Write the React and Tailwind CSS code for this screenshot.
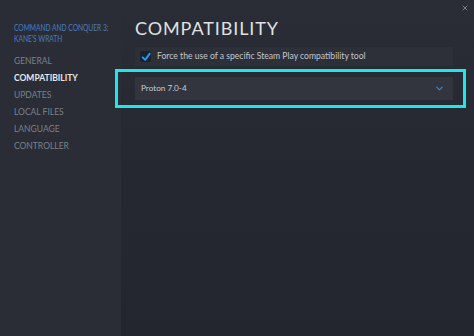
import { ChevronDown, X } from 'lucide-react';

const menu = ['GENERAL', 'COMPATIBILITY', 'UPDATES', 'LOCAL FILES', 'LANGUAGE', 'CONTROLLER'];

export default function App() {
  return (
    <div
      className="relative flex w-[474px] h-[336px] overflow-hidden bg-[#23262e]"
      style={{ fontFamily: 'Lato, "Open Sans", sans-serif' }}
    >
      {/* sidebar */}
      <div className="w-[121px] shrink-0 bg-[#2a2d36] pl-[14px] pt-[23px]">
        <div className="origin-left scale-x-[0.78] text-[8.5px] leading-[11px] text-[#4b7cbf] uppercase whitespace-nowrap">
          Command and Conquer 3:
          <br />
          Kane's Wrath
        </div>
        <div className="mt-[8px] flex flex-col">
          {menu.map((item) => (
            <div
              key={item}
              className={
                'h-[17px] text-[8.5px] leading-[17px] ' +
                (item === 'COMPATIBILITY' ? 'text-[#e6e8ea] font-bold' : 'text-[#7b808a]')
              }
            >
              {item}
            </div>
          ))}
        </div>
      </div>

      {/* main */}
      <div className="flex-1 bg-gradient-to-b from-[#2a2d36] via-[#252830] to-[#23262e] pl-[14px] pr-[21px] pt-[15px]">
        <h1 className="text-[18px] leading-[26px] font-normal tracking-[0.05em] text-[#dfe1e3]">
          COMPATIBILITY
        </h1>
        <div className="mt-[6px] h-[19px] flex items-center bg-[#2d3039] pl-[5px]">
          <div className="w-[11px] h-[11px] rounded-[2px] bg-[#1d2029] flex items-center justify-center">
            <svg viewBox="0 0 12 12" className="w-[10px] h-[10px]">
              <path d="M2 6.5 L5 9.5 L10.5 2" fill="none" stroke="#1a9fff" strokeWidth="2.2" strokeLinecap="round" strokeLinejoin="round" />
            </svg>
          </div>
          <span className="ml-[6px] text-[8.6px] text-[#c3c6cb]">
            Force the use of a specific Steam Play compatibility tool
          </span>
        </div>
        <div className="mt-[11px] h-[23px] flex items-center justify-between bg-[#32353e] pl-[6px] pr-[8px]">
          <span className="text-[8.2px] text-[#c8cbd0]">Proton 7.0-4</span>
          <ChevronDown className="w-[11px] h-[11px] text-[#3f84c8]" strokeWidth={2.5} />
        </div>
      </div>

      {/* close */}
      <X className="absolute right-[5px] top-[4px] w-[8px] h-[8px] text-[#8c9098]" strokeWidth={2.5} />

      {/* highlight overlay */}
      <div className="absolute left-[115px] top-[69px] w-[351px] h-[39px] border-[3px] border-[#1fe6ee]" />
    </div>
  );
}
